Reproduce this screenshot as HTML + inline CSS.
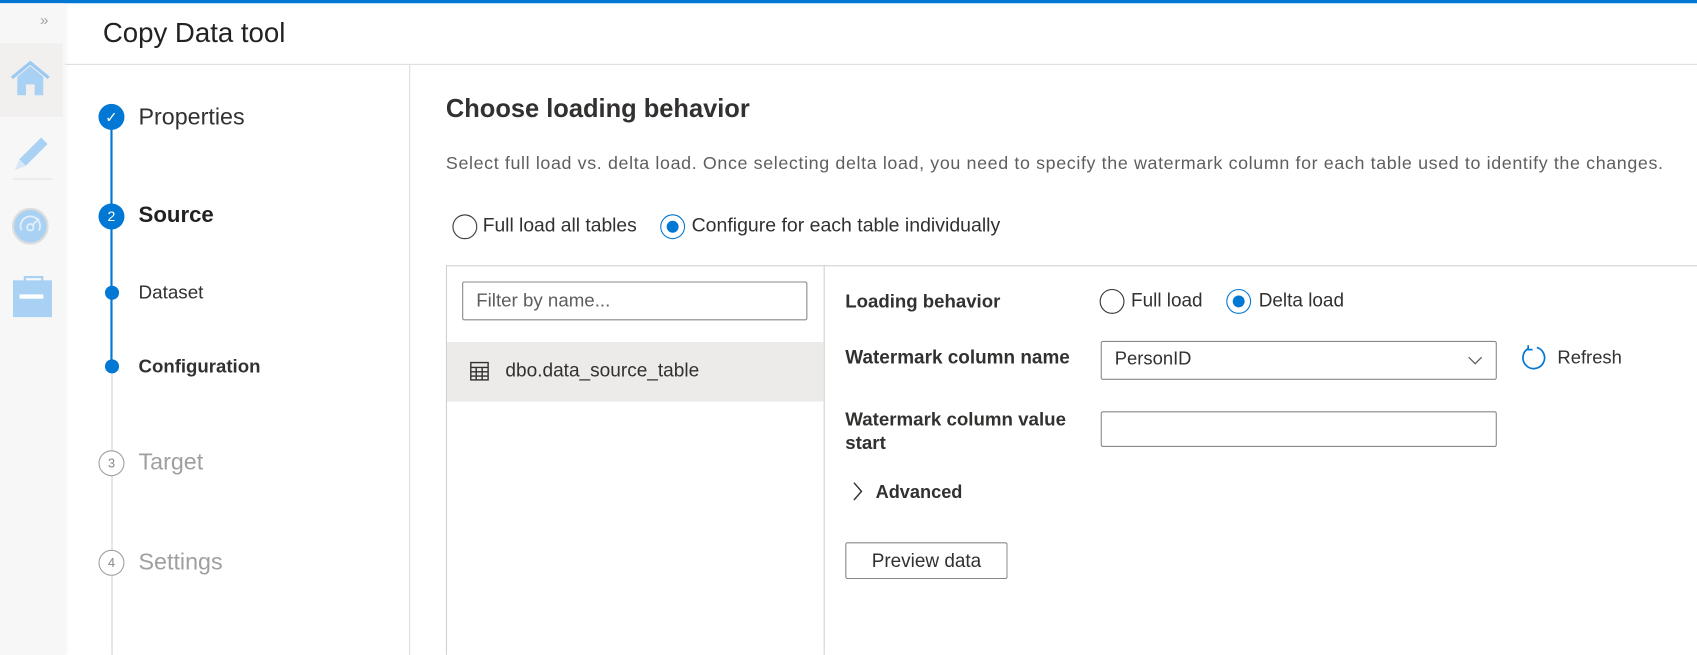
<!DOCTYPE html>
<html><head><meta charset="utf-8"><style>
html,body{margin:0;padding:0;width:1697px;height:605px;overflow:hidden;background:#fff}
#w{position:absolute;left:0;top:0;width:1568px;height:559px;transform:scale(1.0823);transform-origin:0 0;font-family:"Liberation Sans",sans-serif;color:#323130}
.a{position:absolute;white-space:nowrap}
.rad{position:absolute;width:20px;height:20px;border:1px solid #323130;border-radius:50%;box-sizing:border-box}
.rad.on{border-color:#0078d4}
.rad.on:after{content:"";position:absolute;left:5px;top:5px;width:11px;height:11px;border-radius:50%;background:#0078d4}
.box{position:absolute;border:1px solid #8a8886;border-radius:2px;box-sizing:border-box;background:#fff}
</style></head><body><div id="w">
<div class="a" style="left:0;top:0;width:1568px;height:3px;background:#0078d4"></div>
<div class="a" style="left:0;top:3px;width:60px;height:602px;background:#f7f7f7;box-shadow:1px 0 4px rgba(0,0,0,.06)"></div>
<div class="a" style="left:0;top:40px;width:58px;height:68px;background:#f1f0ef"></div>
<div class="a" style="left:37px;top:10px;font-size:14px;color:#a0a0a0">»</div>
<svg class="a" style="left:9px;top:56px" width="38" height="34" viewBox="0 0 38 34"><path d="M2 16 L19 2 L36 16" fill="none" stroke="#9ccaf0" stroke-width="3"/><path d="M7 15 L19 5 L31 15 V32 H23 V22 H15 V32 H7Z" fill="#a9d1f3"/></svg>
<svg class="a" style="left:10px;top:123px" width="36" height="36" viewBox="0 0 36 36"><path d="M4 34 L8 24 L28 4 L34 10 L14 30Z" fill="#a9d1f3"/><path d="M4 34 L8 24 L14 30Z" fill="#d6e8f7"/></svg>
<div class="a" style="left:12px;top:165px;width:36px;height:1px;background:#e3e3e3"></div>
<svg class="a" style="left:11px;top:192px" width="34" height="34" viewBox="0 0 34 34"><circle cx="17" cy="17" r="16" fill="#a9d1f3" stroke="#ddd" stroke-width="2"/><path d="M9 21 A9 9 0 1 1 25 21" fill="none" stroke="#e3f0fb" stroke-width="1.6"/><circle cx="17" cy="18" r="3" fill="none" stroke="#e3f0fb" stroke-width="1.6"/><path d="M19 16 L25 10" stroke="#e3f0fb" stroke-width="1.6"/></svg>
<div class="a" style="left:12px;top:259px;width:36px;height:34px;background:#a9d1f3"></div>
<div class="a" style="left:22px;top:255px;width:14px;height:5px;border:2px solid #a9d1f3;border-bottom:none"></div>
<div class="a" style="left:18px;top:272px;width:22px;height:4px;background:#fff"></div>

<div class="a" style="left:95px;top:17px;font-size:25.5px;color:#222">Copy Data tool</div>
<div class="a" style="left:60px;top:59px;width:1508px;height:1px;background:#e1dfdd"></div>
<div class="a" style="left:378px;top:60px;width:1px;height:545px;background:#e1dfdd"></div>

<div class="a" style="left:102px;top:108px;width:2px;height:230px;background:#0078d4"></div>
<div class="a" style="left:103px;top:338px;width:1px;height:267px;background:#d2d0ce"></div>
<div class="a" style="left:91px;top:96px;width:24px;height:24px;border-radius:50%;background:#0078d4;color:#fff;font-size:14px;text-align:center;line-height:24px">✓</div>
<div class="a" style="left:128px;top:96px;font-size:21.5px">Properties</div>
<div class="a" style="left:91px;top:188px;width:24px;height:24px;border-radius:50%;background:#0078d4;color:#fff;font-size:13px;text-align:center;line-height:24px">2</div>
<div class="a" style="left:128px;top:187px;font-size:20.5px;font-weight:bold;color:#222">Source</div>
<div class="a" style="left:97px;top:264px;width:13px;height:13px;border-radius:50%;background:#0078d4"></div>
<div class="a" style="left:128px;top:260px;font-size:17.4px">Dataset</div>
<div class="a" style="left:97px;top:332px;width:13px;height:13px;border-radius:50%;background:#0078d4"></div>
<div class="a" style="left:128px;top:328px;font-size:17.2px;font-weight:bold">Configuration</div>
<div class="a" style="left:91px;top:416px;width:24px;height:24px;border-radius:50%;background:#fff;border:1px solid #a19f9d;box-sizing:border-box;color:#8a8886;font-size:12px;text-align:center;line-height:22px">3</div>
<div class="a" style="left:128px;top:415px;font-size:21.5px;color:#a19f9d">Target</div>
<div class="a" style="left:91px;top:508px;width:24px;height:24px;border-radius:50%;background:#fff;border:1px solid #a19f9d;box-sizing:border-box;color:#8a8886;font-size:12px;text-align:center;line-height:22px">4</div>
<div class="a" style="left:128px;top:507px;font-size:21.5px;color:#a19f9d">Settings</div>

<div class="a" style="left:412px;top:87px;font-size:23.5px;font-weight:bold;color:#323130">Choose loading behavior</div>
<div class="a" style="left:412px;top:142px;font-size:16.5px;letter-spacing:0.58px;color:#605e5c">Select full load vs. delta load. Once selecting delta load, you need to specify the watermark column for each table used to identify the changes.</div>
<div class="rad" style="left:418px;top:198px;width:23px;height:23px"></div>
<div class="a" style="left:446px;top:198px;font-size:17.8px">Full load all tables</div>
<div class="rad on" style="left:610px;top:198px;width:23px;height:23px"></div>
<div class="a" style="left:639px;top:198px;font-size:18px">Configure for each table individually</div>

<div class="a" style="left:412px;top:245px;width:1156px;height:1px;background:#d2d0ce"></div>
<div class="a" style="left:412px;top:245px;width:1px;height:360px;background:#d2d0ce"></div>
<div class="a" style="left:761px;top:245px;width:1px;height:360px;background:#d2d0ce"></div>
<div class="box" style="left:427px;top:260px;width:319px;height:36px"></div>
<div class="a" style="left:440px;top:267px;font-size:17.3px;color:#605e5c">Filter by name...</div>
<div class="a" style="left:413px;top:316px;width:348px;height:55px;background:#edebe9"></div>
<svg class="a" style="left:434px;top:334px" width="18" height="18" viewBox="0 0 18 18" fill="none" stroke="#323130" stroke-width="1.3"><rect x="1" y="1" width="16" height="16"/><path d="M1 5.5H17M1 9.5H17M1 13.5H17M6 5.5V17M11.5 5.5V17"/></svg>
<div class="a" style="left:467px;top:332px;font-size:17.6px">dbo.data_source_table</div>

<div class="a" style="left:781px;top:268px;font-size:17.2px;font-weight:bold">Loading behavior</div>
<div class="rad" style="left:1016px;top:267px;width:23px;height:23px"></div>
<div class="a" style="left:1045px;top:267px;font-size:17.5px">Full load</div>
<div class="rad on" style="left:1133px;top:267px;width:23px;height:23px"></div>
<div class="a" style="left:1163px;top:267px;font-size:17.5px">Delta load</div>

<div class="a" style="left:781px;top:320px;font-size:17.5px;font-weight:bold">Watermark column name</div>
<div class="box" style="left:1017px;top:315px;width:366px;height:36px"></div>
<div class="a" style="left:1030px;top:322px;font-size:17px">PersonID</div>
<svg class="a" style="left:1356px;top:328px" width="14" height="10" viewBox="0 0 14 10"><path d="M1 2 L7 8 L13 2" fill="none" stroke="#605e5c" stroke-width="1.2"/></svg>
<svg class="a" style="left:1405px;top:318px" width="24" height="26" viewBox="0 0 24 26"><path d="M7 4 A10 10 0 1 0 15 3" fill="none" stroke="#0078d4" stroke-width="1.6"/><path d="M7 1 V5 H11" fill="none" stroke="#0078d4" stroke-width="1.6"/></svg>
<div class="a" style="left:1439px;top:321px;font-size:17px">Refresh</div>

<div class="a" style="left:781px;top:376px;font-size:17.3px;font-weight:bold;line-height:22px">Watermark column value<br>start</div>
<div class="box" style="left:1017px;top:380px;width:366px;height:33px"></div>

<svg class="a" style="left:786px;top:444px" width="12" height="20" viewBox="0 0 12 20"><path d="M3 2 L10 10 L3 18" fill="none" stroke="#323130" stroke-width="1.3"/></svg>
<div class="a" style="left:809px;top:445px;font-size:16.8px;font-weight:bold">Advanced</div>
<div class="box" style="left:781px;top:501px;width:150px;height:34px;border-radius:2px"></div>
<div class="a" style="left:781px;top:508px;width:150px;text-align:center;font-size:17.5px">Preview data</div>
</div></body></html>
